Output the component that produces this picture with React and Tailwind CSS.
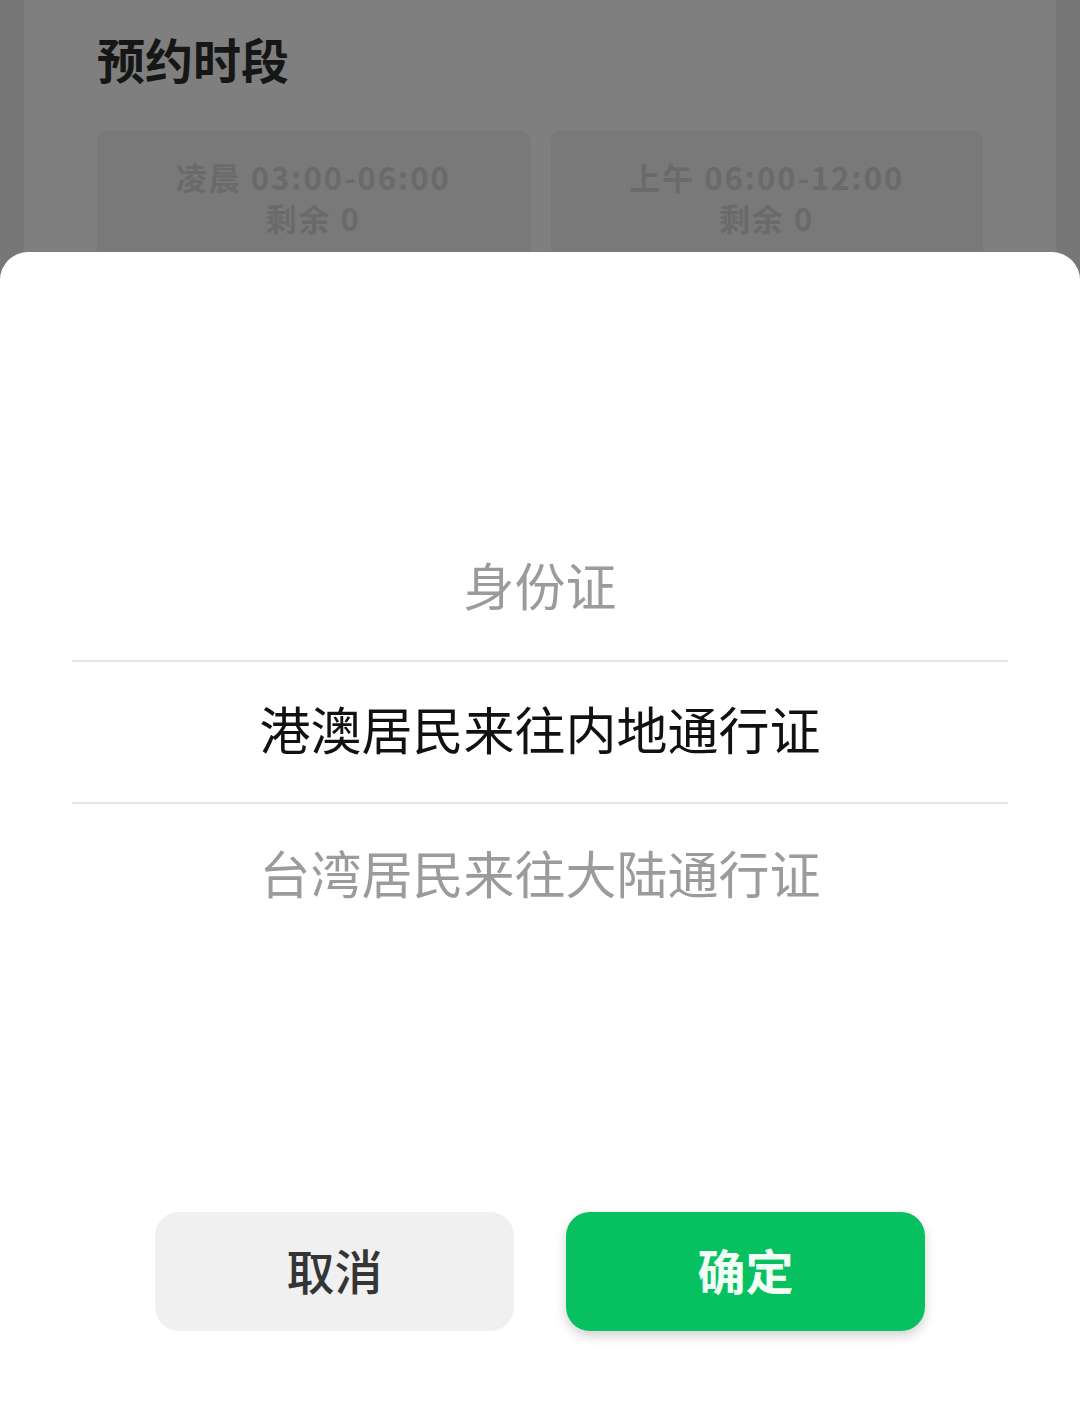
import React from 'react';

const font = { fontFamily: '"Noto Sans CJK SC", "Noto Sans", sans-serif' };

const slots = [
  { label: '凌晨 03:00-06:00', left: '剩余 0' },
  { label: '上午 06:00-12:00', left: '剩余 0' },
];

const options = ['身份证', '港澳居民来往内地通行证', '台湾居民来往大陆通行证'];

export default function App() {
  const selected = 1;

  return (
    <div className="relative h-[1428px] w-[1080px] overflow-hidden bg-[#777777]" style={font}>
      {/* Page behind the sheet, dimmed */}
      <div className="mx-[24px] h-full bg-[#7f7f7f] px-[73px] pt-[26px]">
        <h2 className="text-[48px] font-bold leading-[64px] text-[#161616]">预约时段</h2>
        <div className="mt-[40px] grid grid-cols-2 gap-[21px]">
          {slots.map((s) => (
            <div key={s.label} className="h-[160px] rounded-[10px] bg-[#797979] pt-[26px] text-center text-[31px] font-semibold leading-[41px] tracking-[2px] text-[#6a6a6a]">
              <div>{s.label}</div>
              <div>{s.left}</div>
            </div>
          ))}
        </div>
      </div>

      {/* Bottom sheet */}
      <div className="absolute inset-x-0 top-[252px] bottom-0 rounded-t-[28px] bg-white">
        <div className="mx-[72px] mt-[264px]">
          {options.map((opt, i) => (
            <div
              key={opt}
              className={
                'flex h-[144px] items-center justify-center pb-[8px] text-[51px] leading-none ' +
                (i === selected ? 'border-y-2 border-[#e6e6e6] text-[#111111]' : 'text-[#9b9b9b]')
              }
            >
              {opt}
            </div>
          ))}
        </div>

        <div className="mt-[264px] flex justify-center gap-[52px]">
          <button className="h-[119px] w-[359px] rounded-[24px] bg-[#f0f0f0] pb-[6px] text-[48px] font-medium text-[#353535]">
            取消
          </button>
          <button className="h-[119px] w-[359px] rounded-[24px] bg-[#07c160] pb-[6px] text-[48px] font-bold text-[#f2fff6] shadow-[0_5px_12px_rgba(0,0,0,0.18)]">
            确定
          </button>
        </div>
      </div>
    </div>
  );
}
